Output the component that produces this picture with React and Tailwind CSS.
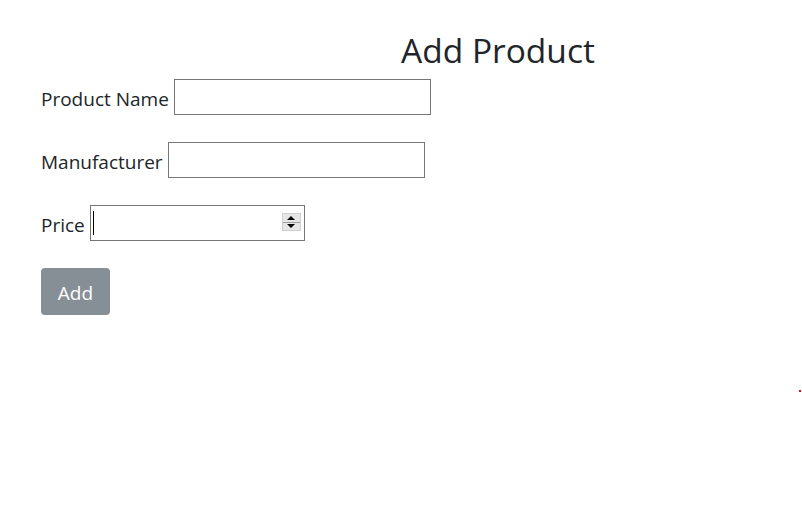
import React from 'react';

function Field({ label, inputWidth, children }) {
  return (
    <div className="flex items-center gap-[5px] mb-[27px]">
      <label className="text-[19px] text-[#212529] leading-none pt-[4px]">{label}</label>
      {children || (
        <input
          type="text"
          className={`h-[36px] ${inputWidth} border border-[#767676] bg-white outline-none`}
        />
      )}
    </div>
  );
}

export default function App() {
  return (
    <div className="relative w-[802px] h-[527px] bg-white font-['Open_Sans','Noto_Sans',sans-serif]">
      <div className="pl-[41px] pt-[28px]">
        <h1 className="pl-[360px] text-[33.5px] leading-[44px] text-[#212529] font-normal mb-[7px]">Add Product</h1>

        <Field label="Product Name" inputWidth="w-[257px]" />
        <Field label="Manufacturer" inputWidth="w-[257px]" />
        <Field label="Price">
          <div className="relative h-[36px] w-[215px] border border-[#767676] bg-white">
            {/* caret */}
            <div className="absolute left-[2px] top-[5px] w-px h-[24px] bg-black" />
            {/* spinner */}
            <div className="absolute left-[191px] top-[7px] w-[19px] h-[18px] bg-[#e6e6e6] border border-[#d0d0d0] flex flex-col">
              <div className="flex-1 flex items-center justify-center border-b border-[#a0a0a0]">
                <div className="w-0 h-0 border-l-[4px] border-r-[4px] border-b-[4px] border-l-transparent border-r-transparent border-b-black" />
              </div>
              <div className="flex-1 flex items-center justify-center">
                <div className="w-0 h-0 border-l-[4px] border-r-[4px] border-t-[4px] border-l-transparent border-r-transparent border-t-black" />
              </div>
            </div>
          </div>
        </Field>

        <button className="w-[69px] h-[47px] pt-[3px] rounded-[4px] bg-[#868e96] text-white text-[19px]">Add</button>
      </div>

      <div className="absolute left-[799px] top-[390px] w-[2px] h-[2px] bg-[#ff0000]" />
    </div>
  );
}
